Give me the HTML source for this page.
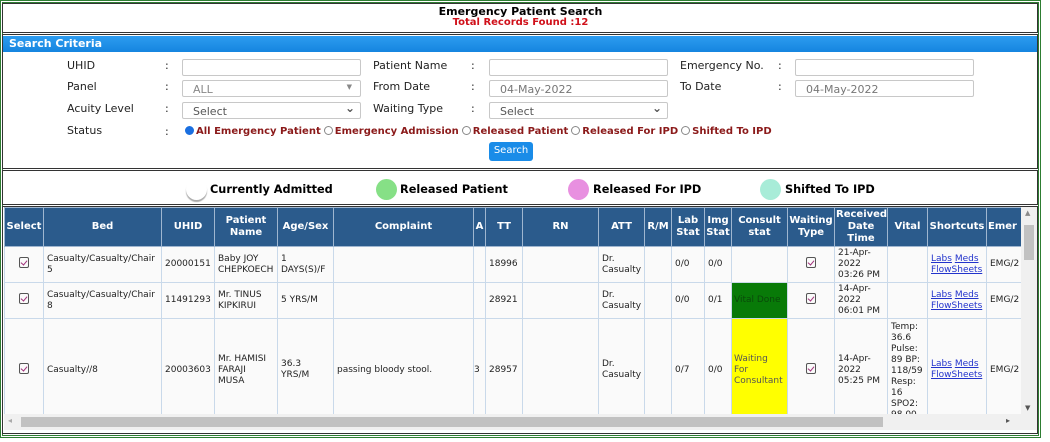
<!DOCTYPE html>
<html><head><meta charset="utf-8"><style>
*{box-sizing:border-box;margin:0;padding:0}
body{width:1050px;height:442px;background:#fff;font-family:"DejaVu Sans","Liberation Sans",sans-serif;position:relative;overflow:hidden;color:#000}
.a{position:absolute}
.outer{left:0;top:0;width:1041px;height:438px;border:3px double #2e7d32}
.pan{border:1px solid #333;left:2px;width:1036px}
.lbl{font-size:11px;color:#222}
.inp{position:absolute;height:17px;border:1px solid #c8c8c8;border-radius:2px;background:#fff;font-size:11px;color:#555;padding:2px 0 0 10px}
.rad{font-size:10px;font-weight:bold;color:#8b1a1a}
.rb{display:inline-block;width:9px;height:9px;border:1px solid #888;border-radius:50%;vertical-align:-1px;margin:0 2px 0 3px;background:#fff}
.leg{font-size:11.3px;font-weight:bold}
.dot{position:absolute;width:21px;height:21px;border-radius:50%}
table{border-collapse:collapse;table-layout:fixed;font-size:9px;color:#222}
th{background:#2b5b8c;color:#fff;font-size:10px;font-weight:bold;border:1px solid #9fb6d0;height:39px;line-height:12px;padding:0 1px}
td{border:1px solid #c9d9ea;padding:0 3px;vertical-align:middle;line-height:11px;background:#fafafa}
.cb{display:inline-block;width:10px;height:11px;border:1.5px solid #555;border-radius:2px;position:relative}
.cb:after{content:"";position:absolute;left:2px;top:1px;width:3px;height:5px;border:solid #a0307a;border-width:0 1.5px 1.5px 0;transform:rotate(40deg)}
a{color:#2233cc;text-decoration:underline}
</style></head><body>
<div class="a outer"></div>
<div class="a pan" style="top:3px;height:30px"></div>
<div class="a" style="left:0;width:1041px;top:5px;text-align:center;font-size:11px;font-weight:bold">Emergency Patient Search</div>
<div class="a" style="left:0;width:1041px;top:17px;text-align:center;font-size:10px;font-weight:bold;color:#d0101a">Total Records Found :12</div>
<div class="a pan" style="top:34px;height:135px"></div>
<div class="a" style="left:3px;top:36px;width:1034px;height:16px;background:linear-gradient(#2d9cf0,#1585e0);color:#fff;font-size:11px;font-weight:bold;padding:1px 0 0 6px">Search Criteria</div>
<div class="a lbl" style="left:67px;top:59px">UHID</div><div class="a lbl" style="left:165px;top:59px">:</div>
<div class="inp" style="left:182px;top:59px;width:179px"></div>
<div class="a lbl" style="left:373px;top:59px">Patient Name</div><div class="a lbl" style="left:471px;top:59px">:</div>
<div class="inp" style="left:489px;top:59px;width:179px"></div>
<div class="a lbl" style="left:680px;top:59px">Emergency No.</div><div class="a lbl" style="left:778px;top:59px">:</div>
<div class="inp" style="left:795px;top:59px;width:179px"></div>

<div class="a lbl" style="left:67px;top:80px">Panel</div><div class="a lbl" style="left:165px;top:80px">:</div>
<div class="inp" style="left:182px;top:80px;width:179px;color:#888">ALL<span style="position:absolute;right:8px;top:2px;font-size:7px">▼</span></div>
<div class="a lbl" style="left:373px;top:80px">From Date</div><div class="a lbl" style="left:471px;top:80px">:</div>
<div class="inp" style="left:489px;top:80px;width:179px;color:#777">04-May-2022</div>
<div class="a lbl" style="left:680px;top:80px">To Date</div><div class="a lbl" style="left:778px;top:80px">:</div>
<div class="inp" style="left:795px;top:80px;width:179px;color:#777">04-May-2022</div>

<div class="a lbl" style="left:67px;top:102px">Acuity Level</div><div class="a lbl" style="left:165px;top:102px">:</div>
<div class="inp" style="left:182px;top:102px;width:179px">Select<span style="position:absolute;right:5px;top:-2px;font-size:12px;font-weight:bold">⌄</span></div>
<div class="a lbl" style="left:373px;top:102px">Waiting Type</div><div class="a lbl" style="left:471px;top:102px">:</div>
<div class="inp" style="left:489px;top:102px;width:179px">Select<span style="position:absolute;right:5px;top:-2px;font-size:12px;font-weight:bold">⌄</span></div>

<div class="a lbl" style="left:67px;top:124px">Status</div><div class="a lbl" style="left:165px;top:125px">:</div>
<div class="a rad" style="left:185px;top:126px;white-space:nowrap"><span class="rb" style="background:#1a6fe0;border-color:#1a6fe0;margin-left:0"></span>All Emergency Patient<span class="rb"></span>Emergency Admission<span class="rb"></span>Released Patient<span class="rb"></span>Released For IPD<span class="rb"></span>Shifted To IPD</div>
<div class="a" style="left:489px;top:142px;width:44px;height:19px;background:#1a8ce8;border-radius:3px;color:#fff;font-size:10px;text-align:center;line-height:18px">Search</div>

<div class="a pan" style="top:170px;height:35px"></div>
<div class="dot" style="left:186px;top:179px;background:#fff;box-shadow:0 2px 1px #aaa"></div><div class="a leg" style="left:210px;top:183px">Currently Admitted</div>
<div class="dot" style="left:376px;top:179px;background:#86e086"></div><div class="a leg" style="left:400px;top:183px">Released Patient</div>
<div class="dot" style="left:568px;top:179px;background:#e890e0"></div><div class="a leg" style="left:593px;top:183px">Released For IPD</div>
<div class="dot" style="left:760px;top:179px;background:#a8ecd8"></div><div class="a leg" style="left:785px;top:183px">Shifted To IPD</div>

<div class="a pan" style="top:206px;height:228px"></div>
<div class="a" style="left:4px;top:207px;width:1017px;height:207px;overflow:hidden">
<table style="width:1017px">
<colgroup><col style="width:39px"><col style="width:118px"><col style="width:53px"><col style="width:63px"><col style="width:56px"><col style="width:140px"><col style="width:12px"><col style="width:37px"><col style="width:76px"><col style="width:46px"><col style="width:27px"><col style="width:33px"><col style="width:27px"><col style="width:56px"><col style="width:47px"><col style="width:53px"><col style="width:40px"><col style="width:59px"><col style="width:35px"></colgroup>
<tr><th>Select</th><th>Bed</th><th>UHID</th><th>Patient Name</th><th>Age/Sex</th><th>Complaint</th><th>A</th><th>TT</th><th>RN</th><th>ATT</th><th>R/M</th><th>Lab Stat</th><th>Img Stat</th><th>Consult stat</th><th>Waiting Type</th><th>Received Date Time</th><th>Vital</th><th>Shortcuts</th><th style="text-align:left">Emer</th></tr>
<tr style="height:36px"><td style="text-align:center"><span class="cb"></span></td><td>Casualty/Casualty/Chair 5</td><td>20000151</td><td>Baby JOY CHEPKOECH</td><td>1 DAYS(S)/F</td><td></td><td></td><td>18996</td><td></td><td>Dr. Casualty</td><td></td><td>0/0</td><td>0/0</td><td></td><td style="text-align:center"><span class="cb"></span></td><td>21-Apr-2022 03:26 PM</td><td></td><td><a>Labs</a> <a>Meds</a> <a>FlowSheets</a></td><td>EMG/2</td></tr>
<tr style="height:36px"><td style="text-align:center"><span class="cb"></span></td><td>Casualty/Casualty/Chair 8</td><td>11491293</td><td>Mr. TINUS KIPKIRUI</td><td>5 YRS/M</td><td></td><td></td><td>28921</td><td></td><td>Dr. Casualty</td><td></td><td>0/0</td><td>0/1</td><td style="background:#087a08;color:#0a4a0a;white-space:nowrap;padding:0 2px">Vital Done</td><td style="text-align:center"><span class="cb"></span></td><td>14-Apr-2022 06:01 PM</td><td></td><td><a>Labs</a> <a>Meds</a> <a>FlowSheets</a></td><td>EMG/2</td></tr>
<tr style="height:97px"><td style="text-align:center"><span class="cb"></span></td><td>Casualty//8</td><td>20003603</td><td>Mr. HAMISI FARAJI MUSA</td><td>36.3 YRS/M</td><td>passing bloody stool.</td><td style="padding:0">3</td><td>28957</td><td></td><td>Dr. Casualty</td><td></td><td>0/7</td><td>0/0</td><td style="background:#ffff00;color:#555;padding:0 2px">Waiting<br>For<br>Consultant</td><td style="text-align:center"><span class="cb"></span></td><td>14-Apr-2022 05:25 PM</td><td style="vertical-align:top;padding-top:3px">Temp: 36.6 Pulse: 89 BP: 118/59 Resp: 16 SPO2: 98.00</td><td><a>Labs</a> <a>Meds</a> <a>FlowSheets</a></td><td>EMG/2</td></tr>
</table></div>
<div class="a" style="left:1021px;top:207px;width:16px;height:207px;background:#f0f0f0"><div style="position:absolute;left:3px;top:18px;width:10px;height:35px;background:#c1c1c1"></div><div style="position:absolute;top:2px;left:4px;font-size:7px;color:#888">▲</div><div style="position:absolute;bottom:2px;left:4px;font-size:7px;color:#555">▼</div></div>
<div class="a" style="left:4px;top:414px;width:1033px;height:16px;background:#f0f0f0"><div style="position:absolute;left:17px;top:3px;width:862px;height:10px;background:#c1c1c1"></div><div style="position:absolute;left:4px;top:2px;font-size:8px;color:#aaa">◂</div><div style="position:absolute;left:1002px;top:2px;font-size:8px;color:#555">▸</div></div>
</body></html>
